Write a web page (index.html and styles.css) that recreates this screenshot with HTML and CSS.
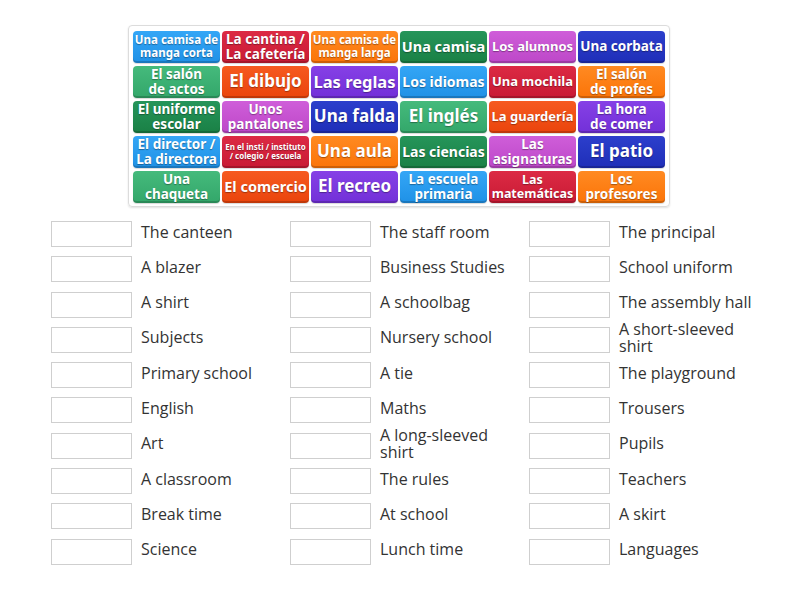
FILE: index.html
```html
<!DOCTYPE html>
<html lang="es">
<head>
<meta charset="utf-8">
<title>Match up</title>
<link rel="stylesheet" href="styles.css">
</head>
<body>
<div class="board">
  <div class="tile blue"><span>Una camisa de<br>manga corta</span></div>
  <div class="tile crimson"><span>La cantina /<br>La cafetería</span></div>
  <div class="tile orange"><span>Una camisa de<br>manga larga</span></div>
  <div class="tile dgreen"><span>Una camisa</span></div>
  <div class="tile magenta"><span>Los alumnos</span></div>
  <div class="tile dblue"><span>Una corbata</span></div>

  <div class="tile mgreen"><span>El salón<br>de actos</span></div>
  <div class="tile ored"><span>El dibujo</span></div>
  <div class="tile purple"><span>Las reglas</span></div>
  <div class="tile blue"><span>Los idiomas</span></div>
  <div class="tile crimson"><span>Una mochila</span></div>
  <div class="tile orange"><span>El salón<br>de profes</span></div>

  <div class="tile dgreen"><span>El uniforme<br>escolar</span></div>
  <div class="tile magenta"><span>Unos<br>pantalones</span></div>
  <div class="tile dblue"><span>Una falda</span></div>
  <div class="tile mgreen"><span>El inglés</span></div>
  <div class="tile ored"><span>La guardería</span></div>
  <div class="tile purple"><span>La hora<br>de comer</span></div>

  <div class="tile blue"><span>El director /<br>La directora</span></div>
  <div class="tile crimson"><span>En el insti / instituto<br>/ colegio / escuela</span></div>
  <div class="tile orange"><span>Una aula</span></div>
  <div class="tile dgreen"><span>Las ciencias</span></div>
  <div class="tile magenta"><span>Las<br>asignaturas</span></div>
  <div class="tile dblue"><span>El patio</span></div>

  <div class="tile mgreen"><span>Una<br>chaqueta</span></div>
  <div class="tile ored"><span>El comercio</span></div>
  <div class="tile purple"><span>El recreo</span></div>
  <div class="tile blue"><span>La escuela<br>primaria</span></div>
  <div class="tile crimson"><span>Las<br>matemáticas</span></div>
  <div class="tile orange"><span>Los<br>profesores</span></div>
</div>

<div class="answers">
  <div class="item"><div class="slot"></div><div class="label">The canteen</div></div>
  <div class="item"><div class="slot"></div><div class="label">The staff room</div></div>
  <div class="item"><div class="slot"></div><div class="label">The principal</div></div>

  <div class="item"><div class="slot"></div><div class="label">A blazer</div></div>
  <div class="item"><div class="slot"></div><div class="label">Business Studies</div></div>
  <div class="item"><div class="slot"></div><div class="label">School uniform</div></div>

  <div class="item"><div class="slot"></div><div class="label">A shirt</div></div>
  <div class="item"><div class="slot"></div><div class="label">A schoolbag</div></div>
  <div class="item"><div class="slot"></div><div class="label">The assembly hall</div></div>

  <div class="item"><div class="slot"></div><div class="label">Subjects</div></div>
  <div class="item"><div class="slot"></div><div class="label">Nursery school</div></div>
  <div class="item"><div class="slot"></div><div class="label">A short-sleeved shirt</div></div>

  <div class="item"><div class="slot"></div><div class="label">Primary school</div></div>
  <div class="item"><div class="slot"></div><div class="label">A tie</div></div>
  <div class="item"><div class="slot"></div><div class="label">The playground</div></div>

  <div class="item"><div class="slot"></div><div class="label">English</div></div>
  <div class="item"><div class="slot"></div><div class="label">Maths</div></div>
  <div class="item"><div class="slot"></div><div class="label">Trousers</div></div>

  <div class="item"><div class="slot"></div><div class="label">Art</div></div>
  <div class="item"><div class="slot"></div><div class="label">A long-sleeved shirt</div></div>
  <div class="item"><div class="slot"></div><div class="label">Pupils</div></div>

  <div class="item"><div class="slot"></div><div class="label">A classroom</div></div>
  <div class="item"><div class="slot"></div><div class="label">The rules</div></div>
  <div class="item"><div class="slot"></div><div class="label">Teachers</div></div>

  <div class="item"><div class="slot"></div><div class="label">Break time</div></div>
  <div class="item"><div class="slot"></div><div class="label">At school</div></div>
  <div class="item"><div class="slot"></div><div class="label">A skirt</div></div>

  <div class="item"><div class="slot"></div><div class="label">Science</div></div>
  <div class="item"><div class="slot"></div><div class="label">Lunch time</div></div>
  <div class="item"><div class="slot"></div><div class="label">Languages</div></div>
</div>
<script src="fit.js"></script>
</body>
</html>
```

FILE: styles.css
```css
html, body {
  margin: 0;
  padding: 0;
  background: #ffffff;
}

body {
  font-family: "Open Sans", "Liberation Sans", sans-serif;
  color: #333333;
}

.board {
  box-sizing: border-box;
  width: 542px;
  margin: 25px 0 0 128px;
  padding: 5px 4px 3px 4px;
  border: 1px solid #dcdcdc;
  border-radius: 4px;
  box-shadow: 0 1px 2px rgba(0, 0, 0, 0.12);
  display: grid;
  grid-template-columns: repeat(6, 87px);
  grid-auto-rows: 32px;
  column-gap: 2px;
  row-gap: 3px;
}

.tile {
  box-sizing: border-box;
  border-radius: 4px;
  display: flex;
  align-items: center;
  justify-content: center;
  padding: 0 2px 1px 2px;
  overflow: hidden;
  color: #ffffff;
  font-family: "Noto Sans", "Open Sans", sans-serif;
  font-weight: 700;
  text-align: center;
  line-height: 1.08;
  text-shadow: 0 1px 1px rgba(0, 0, 0, 0.35);
  box-shadow: inset 0 -2px 0 rgba(0, 0, 0, 0.18), 0 1px 1px rgba(0, 0, 0, 0.15);
  white-space: nowrap;
}

.tile span {
  display: inline-block;
  font-size: 17px;
}

.blue    { background: linear-gradient(#34a6f6, #1f91e6); }
.crimson { background: linear-gradient(#dc2a44, #c81a34); }
.orange  { background: linear-gradient(#ff8a22, #fb7408); }
.dgreen  { background: linear-gradient(#25955a, #1a8045); }
.magenta { background: linear-gradient(#cf5ed9, #bd47c8); }
.dblue   { background: linear-gradient(#2c3fcc, #1f2eb8); }
.mgreen  { background: linear-gradient(#45ba7c, #33a76a); }
.ored    { background: linear-gradient(#f65a20, #ea440c); }
.purple  { background: linear-gradient(#8640e6, #7230d8); }

.answers {
  margin-top: 14px;
  padding-left: 51px;
  display: grid;
  grid-template-columns: repeat(3, 239px);
  grid-auto-rows: 35.3px;
  align-items: start;
}

.item {
  height: 26px;
  display: flex;
  align-items: center;
  gap: 9px;
}

.slot {
  box-sizing: border-box;
  flex: none;
  width: 81px;
  height: 26px;
  border: 1px solid #cfcfcf;
  background: #ffffff;
}

.label {
  margin-top: -4px;
  max-width: 136px;
  font-size: 16px;
  line-height: 17px;
  color: #333333;
}
```

FILE: fit.js
```js
document.querySelectorAll('.tile').forEach(function (tile) {
  var span = tile.querySelector('span');
  var maxW = tile.clientWidth - 4;
  var maxH = tile.clientHeight - 3;
  var size = 17;
  span.style.fontSize = size + 'px';
  while ((span.offsetWidth > maxW || span.offsetHeight > maxH) && size > 6) {
    size -= 0.5;
    span.style.fontSize = size + 'px';
  }
});
```
